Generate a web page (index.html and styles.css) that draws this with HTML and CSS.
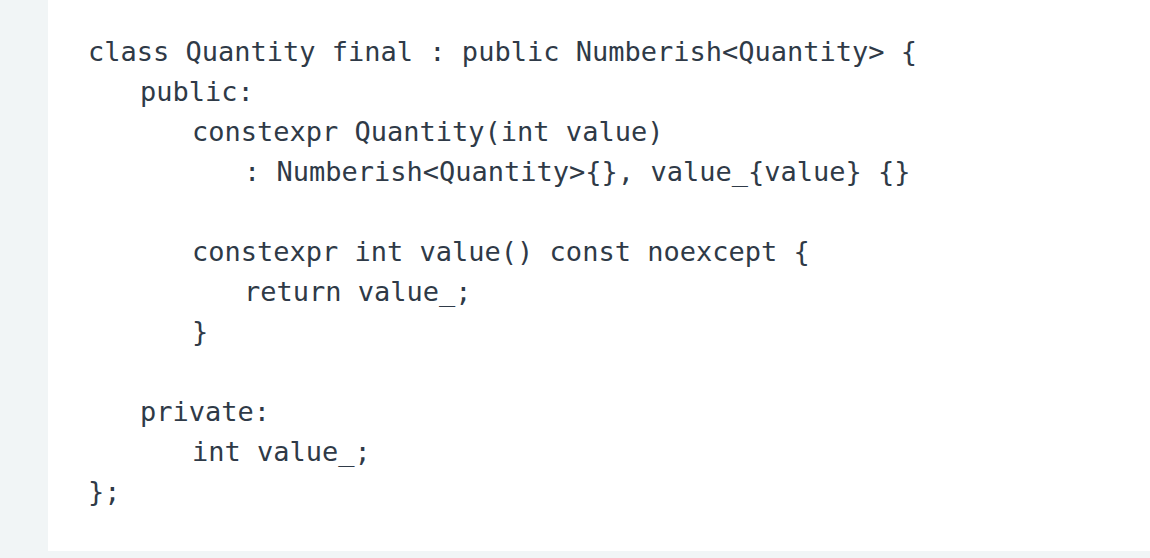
FILE: index.html
```html
<!DOCTYPE html>
<html>
<head>
<meta charset="utf-8">
<link rel="stylesheet" href="styles.css">
</head>
<body>
<div class="page">
  <div class="panel">
<pre class="code"><code>class Quantity final : public Numberish&lt;Quantity&gt; {
	public:
		constexpr Quantity(int value)
			: Numberish&lt;Quantity&gt;{}, value_{value} {}

		constexpr int value() const noexcept {
			return value_;
		}

	private:
		int value_;
};</code></pre>
  </div>
</div>
</body>
</html>
```
FILE: styles.css
```css
html, body {
  margin: 0;
  padding: 0;
  background: #f1f5f6;
}
.page {
  width: 1150px;
  height: 558px;
  padding-left: 48px;
  box-sizing: border-box;
}
.panel {
  background: #ffffff;
  height: 551px;
  box-sizing: border-box;
  padding: 32px 0 0 40px;
}
.code {
  margin: 0;
  font-family: "DejaVu Sans Mono", "Liberation Mono", monospace;
  font-size: 27px;
  line-height: 40px;
  color: #2f3a47;
  tab-size: 52px;
  -moz-tab-size: 52px;
}
```
